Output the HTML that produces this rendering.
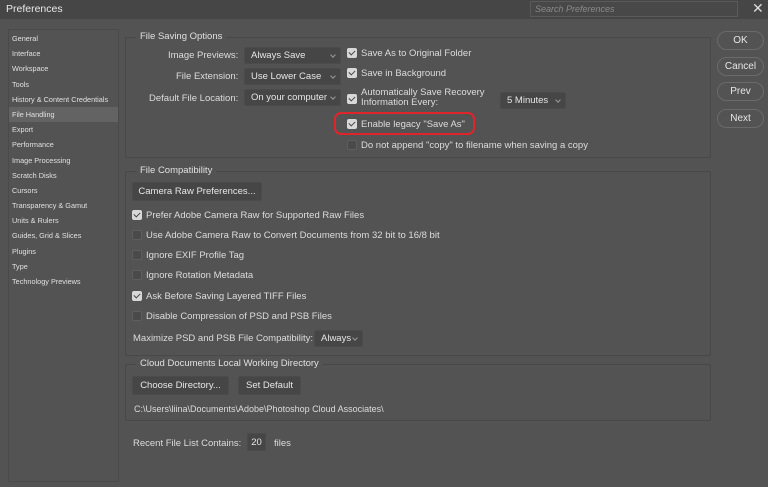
<!DOCTYPE html>
<html><head><style>
*{box-sizing:border-box;margin:0;padding:0}
body{width:768px;height:487px;background:#535353;font-family:"Liberation Sans",sans-serif;color:#d8d8d8;position:relative;overflow:hidden;font-size:9.5px}
.abs{position:absolute;white-space:nowrap}
.title{position:absolute;left:0;top:0;width:768px;height:19px;background:#464646}
.side{position:absolute;left:8px;top:29px;width:111px;height:453px;border:1px solid #4a4a4a;background:#535353}
.side div{height:15.2px;line-height:15.2px;padding-left:3px;font-size:7.3px;color:#e0e0e0}
.side .sel{background:#636363}
.box{position:absolute;border:1px solid #484848;border-radius:2px}
.leg{position:absolute;background:#535353;padding:0 4px;top:-7px;left:10px;font-size:9.5px;color:#e0e0e0}
.dd{position:absolute;height:17px;background:#464646;border:1px solid #4b4b4b;border-radius:2px;padding-left:6px;line-height:16px;font-size:9.5px;color:#e6e6e6}
.dd:after{content:"";position:absolute;right:5px;top:5px;width:3px;height:3px;border:solid #999;border-width:0 1px 1px 0;transform:rotate(45deg)}
.cb{position:absolute;width:10px;height:10px;background:#d8d8d8;border-radius:2px}
.cb.on:after{content:"";position:absolute;left:3px;top:1px;width:3px;height:5px;border:solid #444;border-width:0 1.6px 1.6px 0;transform:rotate(45deg)}
.cb.off{background:#4a4a4a;border:1px solid #5e5e5e}
.btn{position:absolute;height:19px;background:#464646;border:1px solid #4b4b4b;border-radius:2px;line-height:18px;text-align:center;font-size:9.5px;color:#e6e6e6}
.rb{position:absolute;left:717px;width:47px;height:19px;border:1px solid #6a6a6a;border-radius:10px;text-align:center;line-height:17px;font-size:10px;color:#e6e6e6}
.lbl{position:absolute;white-space:nowrap;font-size:9.5px;color:#dcdcdc;margin-top:1px}
</style></head><body>
<div class="title"></div>
<div class="abs" style="left:6px;top:3px;font-size:10.5px;color:#e8e8e8">Preferences</div>
<div class="abs" style="left:530px;top:1px;width:208px;height:16px;border:1px solid #5a5a5a;background:#484848;font-size:9px;font-style:italic;color:#8a8a8a;padding:2px 4px">Search Preferences</div>
<div class="abs" style="left:752px;top:0px;font-size:14px;color:#ddd">✕</div>

<div class="side">
<div style="margin-top:1px">General</div><div>Interface</div><div>Workspace</div><div>Tools</div><div>History &amp; Content Credentials</div><div class="sel">File Handling</div><div>Export</div><div>Performance</div><div>Image Processing</div><div>Scratch Disks</div><div>Cursors</div><div>Transparency &amp; Gamut</div><div>Units &amp; Rulers</div><div>Guides, Grid &amp; Slices</div><div>Plugins</div><div>Type</div><div>Technology Previews</div>
</div>

<div class="box" style="left:125px;top:37px;width:586px;height:121px"><div class="leg">File Saving Options</div></div>
<div class="lbl" style="left:168px;top:49px">Image Previews:</div>
<div class="lbl" style="left:176px;top:70px">File Extension:</div>
<div class="lbl" style="left:149px;top:92px">Default File Location:</div>
<div class="dd" style="left:244px;top:47px;width:97px">Always Save</div>
<div class="dd" style="left:244px;top:68px;width:97px">Use Lower Case</div>
<div class="dd" style="left:244px;top:89px;width:97px">On your computer</div>
<div class="cb on" style="left:347px;top:48px"></div><div class="lbl" style="left:361px;top:47px">Save As to Original Folder</div>
<div class="cb on" style="left:347px;top:68px"></div><div class="lbl" style="left:361px;top:67px">Save in Background</div>
<div class="cb on" style="left:347px;top:94px"></div><div class="lbl" style="left:361px;top:87px;line-height:10px">Automatically Save Recovery<br>Information Every:</div>
<div class="dd" style="left:500px;top:92px;width:66px">5 Minutes</div>
<div class="abs" style="left:334px;top:112px;width:141px;height:23px;border:2px solid #e0252a;border-radius:7px"></div>
<div class="cb on" style="left:347px;top:119px"></div><div class="lbl" style="left:361px;top:118px">Enable legacy "Save As"</div>
<div class="cb off" style="left:347px;top:140px"></div><div class="lbl" style="left:361px;top:139px">Do not append "copy" to filename when saving a copy</div>

<div class="rb" style="top:31px">OK</div>
<div class="rb" style="top:57px">Cancel</div>
<div class="rb" style="top:82px">Prev</div>
<div class="rb" style="top:109px">Next</div>

<div class="box" style="left:125px;top:171px;width:586px;height:185px"><div class="leg">File Compatibility</div></div>
<div class="btn" style="left:132px;top:182px;width:130px">Camera Raw Preferences...</div>
<div class="cb on" style="left:132px;top:210px"></div><div class="lbl" style="left:146px;top:209px">Prefer Adobe Camera Raw for Supported Raw Files</div>
<div class="cb off" style="left:132px;top:230px"></div><div class="lbl" style="left:146px;top:229px">Use Adobe Camera Raw to Convert Documents from 32 bit to 16/8 bit</div>
<div class="cb off" style="left:132px;top:250px"></div><div class="lbl" style="left:146px;top:249px">Ignore EXIF Profile Tag</div>
<div class="cb off" style="left:132px;top:270px"></div><div class="lbl" style="left:146px;top:269px">Ignore Rotation Metadata</div>
<div class="cb on" style="left:132px;top:291px"></div><div class="lbl" style="left:146px;top:290px">Ask Before Saving Layered TIFF Files</div>
<div class="cb off" style="left:132px;top:311px"></div><div class="lbl" style="left:146px;top:310px">Disable Compression of PSD and PSB Files</div>
<div class="lbl" style="left:133px;top:332px">Maximize PSD and PSB File Compatibility:</div>
<div class="dd" style="left:314px;top:330px;width:49px">Always</div>

<div class="box" style="left:125px;top:364px;width:586px;height:57px"><div class="leg">Cloud Documents Local Working Directory</div></div>
<div class="btn" style="left:132px;top:376px;width:97px">Choose Directory...</div>
<div class="btn" style="left:238px;top:376px;width:63px">Set Default</div>
<div class="lbl" style="left:134px;top:403px;font-size:9px">C:\Users\liina\Documents\Adobe\Photoshop Cloud Associates\</div>
<div class="lbl" style="left:133px;top:437px">Recent File List Contains:</div>
<div class="abs" style="left:247px;top:433px;width:19px;height:18px;background:#464646;border:1px solid #4b4b4b;font-size:9.5px;text-align:center;line-height:17px;color:#e6e6e6">20</div>
<div class="lbl" style="left:274px;top:437px">files</div>
</body></html>
